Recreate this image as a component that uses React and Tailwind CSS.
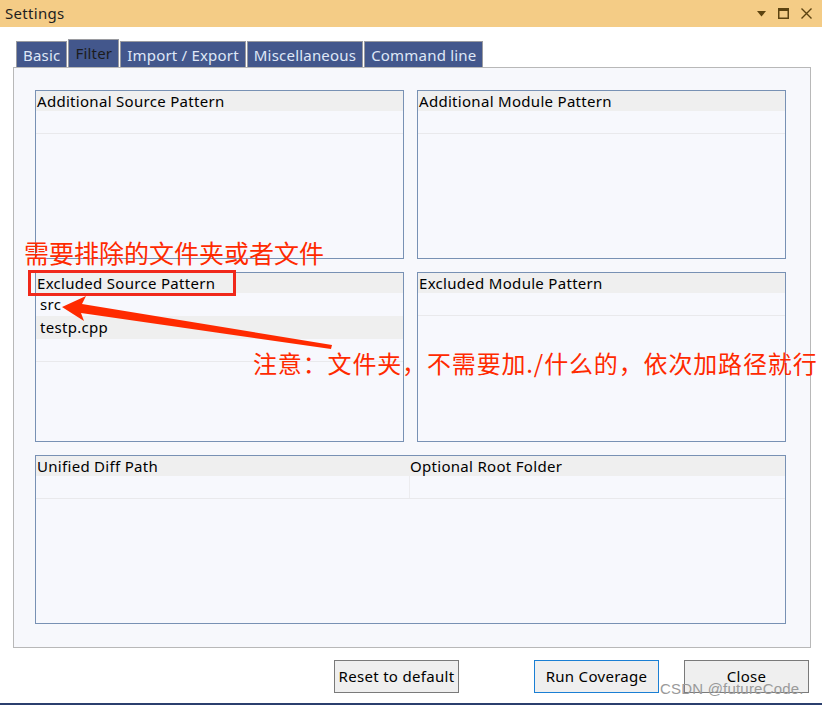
import React from 'react';

const font = { fontFamily: '"Noto Sans", "Open Sans", sans-serif' };
const cjk = { fontFamily: '"Noto Sans CJK SC", sans-serif' };

const tabs = ['Basic', 'Filter', 'Import / Export', 'Miscellaneous', 'Command line'];

const GroupBox = ({ title, rows = [], extra = 1 }) => (
  <div className="border border-[#7891b4] bg-[#f7f8fd] h-full flex flex-col">
    <div className="h-[20px] bg-[#efefef] text-[15px] leading-[20px] tracking-[0.3px] text-black pl-[1px] whitespace-nowrap">
      {title}
    </div>
    {rows.map((r, i) => (
      <div
        key={r}
        className={`h-[23px] text-[15px] leading-[23px] tracking-[0.3px] text-black pl-[4px] ${i % 2 ? 'bg-[#efefef]' : 'bg-[#f7f8fd]'}`}
      >
        {r}
      </div>
    ))}
    {Array.from({ length: extra }).map((_, i) => (
      <div key={i} className="h-[23px] border-b border-[#e9e9ec]" />
    ))}
  </div>
);

const Button = ({ children, active }) => (
  <button
    className={`h-[33px] w-[125px] bg-[#efefef] text-[15px] tracking-[0.3px] text-black border ${active ? 'border-[#1a7fd4]' : 'border-[#7a7a7a]'}`}
  >
    {children}
  </button>
);

export default function App() {
  return (
    <div className="relative w-[822px] h-[705px] bg-white overflow-hidden" style={font}>
      {/* title bar */}
      <div className="h-[27px] bg-[#f4cc86] flex items-center justify-between pl-[5px] pr-[10px]">
        <span className="text-[15px] tracking-[0.3px] text-[#1e1e1e]">Settings</span>
        <div className="flex items-center gap-[12px]">
          <svg width="9" height="6" viewBox="0 0 9 6">
            <path d="M0 0 L9 0 L4.5 5.5 Z" fill="#5c4310" />
          </svg>
          <svg width="11" height="11" viewBox="0 0 11 11">
            <rect x="0.75" y="0.75" width="9.5" height="9.5" fill="none" stroke="#5c4310" strokeWidth="1.5" />
            <rect x="0" y="0" width="11" height="3" fill="#5c4310" />
          </svg>
          <svg width="11" height="11" viewBox="0 0 11 11">
            <path d="M0.5 0.5 L10.5 10.5 M10.5 0.5 L0.5 10.5" stroke="#5c4310" strokeWidth="1.4" />
          </svg>
        </div>
      </div>

      {/* tabs */}
      <div className="flex items-end ml-[16px] mt-[13px] h-[27px] gap-[1px]">
        {tabs.map((t) => {
          const sel = t === 'Filter';
          return (
            <div
              key={t}
              className={`border border-[#9a9ba0] border-b-0 bg-[#43578c] px-[6px] text-[15px] tracking-[0.2px] ${sel ? 'h-[28px] leading-[26px] text-[#1c1c1c]' : 'h-[26px] leading-[26px] text-[#dfe7f7]'}`}
            >
              {t}
            </div>
          );
        })}
      </div>

      {/* tab panel */}
      <div className="ml-[13px] w-[798px] h-[581px] border border-[#b8b8b8] bg-[#f7f8fc] pl-[21px] pt-[22px]">
        <div className="grid grid-cols-[369px_369px] gap-x-[13px] gap-y-[13px] grid-rows-[169px_170px_169px] w-[751px]">
          <GroupBox title="Additional Source Pattern" />
          <GroupBox title="Additional Module Pattern" />
          <GroupBox title="Excluded Source Pattern" rows={['src', 'testp.cpp']} />
          <GroupBox title="Excluded Module Pattern" />
          <div className="col-span-2 border border-[#7891b4] bg-[#f7f8fd] flex flex-col">
            <div className="h-[20px] bg-[#efefef] text-[15px] leading-[20px] tracking-[0.3px] text-black flex">
              <span className="w-[374px] pl-[1px]">Unified Diff Path</span>
              <span>Optional Root Folder</span>
            </div>
            <div className="h-[23px] border-b border-[#e9e9ec] flex">
              <div className="w-[374px] border-r border-[#ececef]" />
            </div>
          </div>
        </div>
      </div>

      {/* buttons */}
      <div className="flex mt-[12px] ml-[334px] gap-[75px]">
        <Button>Reset to default</Button>
        <div className="flex gap-[25px]">
          <Button active>Run Coverage</Button>
          <Button>Close</Button>
        </div>
      </div>

      <div className="absolute left-0 right-0 bottom-0 h-[2px] bg-[#2b3f6e]" />

      {/* watermark */}
      <div className="absolute left-[660px] top-[679px] text-[15px] leading-[19px] text-[#9a9a9a] tracking-[0.2px]" style={{ fontFamily: '"Liberation Sans", sans-serif' }}>
        CSDN @futureCode.
      </div>

      {/* annotations */}
      <div className="absolute left-[24px] top-[236px] text-[25px] leading-[32px] text-[#ff2a00] whitespace-nowrap" style={cjk}>
        需要排除的文件夹或者文件
      </div>
      <div className="absolute left-[28px] top-[270px] w-[208px] h-[26px] border-[3px] border-[#f0281a]" />
      <div className="absolute left-[253px] top-[347px] text-[24px] leading-[32px] text-[#ff2a00] whitespace-nowrap tracking-[0.85px]" style={cjk}>
        注意：文件夹，不需要加./什么的，依次加路径就行
      </div>
      <svg className="absolute left-0 top-0 pointer-events-none" width="822" height="705">
        <polygon
          points="62,307 86,296 82,304 332,345 331,349 81,313 84,321"
          fill="#ff2a00"
        />
      </svg>
    </div>
  );
}
